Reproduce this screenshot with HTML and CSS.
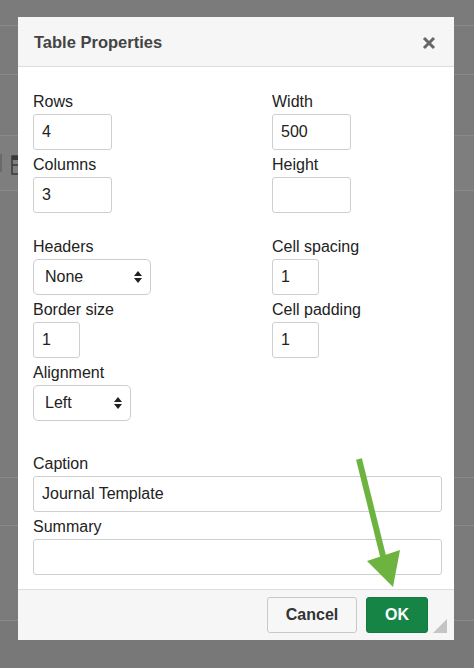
FILE: index.html
```html
<!DOCTYPE html>
<html>
<head>
<meta charset="utf-8">
<link rel="stylesheet" href="styles.css">
</head>
<body>
<div class="backdrop">
  <div class="band b1"></div>
  <div class="band b2"></div>
  <div class="band b3"></div>
  <div class="band toolbar">
    <span class="tb-sep"></span>
    <svg class="tb-icon" width="10" height="20" viewBox="0 0 10 20"><rect x="1" y="1" width="9" height="18" fill="none" stroke="#3a3a3a" stroke-width="1.5"/><rect x="1" y="1" width="9" height="4" fill="#3a3a3a"/><line x1="1" y1="10" x2="10" y2="10" stroke="#3a3a3a" stroke-width="1.5"/></svg>
  </div>
  <div class="band b5"></div>
  <div class="band b6"></div>
  <div class="band b7"></div>
  <div class="band b8"></div>
</div>

<div class="dialog">
  <div class="dlg-head">
    <span class="dlg-title">Table Properties</span>
    <svg class="dlg-close" width="14" height="14" viewBox="0 0 14 14"><path d="M2 2 L12 12 M12 2 L2 12" stroke="#666" stroke-width="3" stroke-linecap="butt"/></svg>
  </div>
  <div class="dlg-body">
    <div class="section two">
      <div class="col">
        <div class="field"><label>Rows</label><input class="inp w79" value="4"></div>
        <div class="field"><label>Columns</label><input class="inp w79" value="3"></div>
      </div>
      <div class="col">
        <div class="field"><label>Width</label><input class="inp w79" value="500"></div>
        <div class="field"><label>Height</label><input class="inp w79" value=""></div>
      </div>
    </div>
    <div class="section two gap24">
      <div class="col">
        <div class="field"><label>Headers</label><div class="sel w118"><span>None</span><svg width="8" height="14" viewBox="0 0 8 14"><path d="M4 1 L8 6 L0 6 Z M0 8 L8 8 L4 13 Z" fill="#222"/></svg></div></div>
        <div class="field"><label>Border size</label><input class="inp w47" value="1"></div>
        <div class="field"><label>Alignment</label><div class="sel w98"><span>Left</span><svg width="8" height="14" viewBox="0 0 8 14"><path d="M4 1 L8 6 L0 6 Z M0 8 L8 8 L4 13 Z" fill="#222"/></svg></div></div>
      </div>
      <div class="col">
        <div class="field"><label>Cell spacing</label><input class="inp w47" value="1"></div>
        <div class="field"><label>Cell padding</label><input class="inp w47" value="1"></div>
      </div>
    </div>
    <div class="section gap32">
      <div class="col">
        <div class="field"><label>Caption</label><input class="inp full" value="Journal Template"></div>
        <div class="field"><label>Summary</label><input class="inp full" value=""></div>
      </div>
    </div>
  </div>
  <div class="dlg-foot">
    <button class="btn cancel">Cancel</button>
    <button class="btn ok">OK</button>
  </div>
  <svg class="resize" width="14" height="14" viewBox="0 0 14 14"><path d="M14 0 L14 14 L0 14 Z" fill="#c4c4c4"/></svg>
</div>

<svg class="arrow" width="474" height="668" viewBox="0 0 474 668">
  <line x1="359" y1="459" x2="384" y2="560" stroke="#6db33f" stroke-width="6"/>
  <path d="M367 561 L400 550 L393 587 Z" fill="#6db33f"/>
</svg>
</body>
</html>
```

FILE: styles.css
```css
html, body {
  margin: 0;
  padding: 0;
}
body {
  width: 474px;
  height: 668px;
  overflow: hidden;
  position: relative;
  background: #787878;
  font-family: "Liberation Sans", Arial, Helvetica, sans-serif;
}
.backdrop {
  display: flex;
  flex-direction: column;
}
.band {
  background: #7b7b7b;
  border-bottom: 1px solid #8a8a8a;
}
.b1 { height: 25px; }
.b2 { height: 48px; }
.b3 { height: 60px; }
.toolbar {
  height: 54px;
  background: #7e7e7e;
  display: flex;
  align-items: center;
  gap: 9px;
}
.tb-sep {
  width: 2px;
  height: 18px;
  background: #6a6a6a;
}
.tb-icon { display: block; margin-top: 4px; }
.b5 { height: 286px; }
.b6 { height: 47px; }
.b7 { height: 94px; }
.b8 { height: 47px; background: #787878; border-bottom: none; }

.dialog {
  position: absolute;
  left: 18px;
  top: 17px;
  width: 436px;
  height: 623px;
  background: #fff;
  display: flex;
  flex-direction: column;
}
.dlg-head {
  height: 50px;
  box-sizing: border-box;
  background: #f6f6f6;
  border-bottom: 1px solid #dcdcdc;
  display: flex;
  align-items: center;
  justify-content: space-between;
  padding: 0 18px 0 16px;
}
.dlg-title {
  font-size: 16.5px;
  font-weight: bold;
  color: #444;
  margin-top: 1px;
}
.dlg-close { display: block; margin-top: 2px; }

.dlg-body {
  padding: 25px 12px 14px 15px;
  flex: 1;
  display: flex;
  flex-direction: column;
}
.section { display: flex; }
.two .col:first-child { width: 239px; }
.section .col { display: flex; flex-direction: column; gap: 5px; }
.gap24 { margin-top: 24px; }
.gap32 { margin-top: 33px; }
.gap32 .col { flex: 1; }
.field { display: flex; flex-direction: column; align-items: flex-start; }
.field label {
  font-size: 16px;
  line-height: 20px;
  color: #222;
  margin-bottom: 2px;
}
.inp {
  height: 36px;
  box-sizing: border-box;
  border: 1px solid #cfcfcf;
  border-radius: 3px;
  padding: 0 8px;
  font-family: "Liberation Sans", Arial, sans-serif;
  font-size: 16px;
  color: #222;
  background: #fff;
  outline: none;
  margin: 0;
}
.w79 { width: 79px; }
.w47 { width: 47px; }
.full { width: 409px; }
.sel {
  height: 36px;
  box-sizing: border-box;
  border: 1px solid #cdcdcd;
  border-radius: 5px;
  padding: 0 8px 0 11px;
  display: flex;
  align-items: center;
  justify-content: space-between;
  font-size: 16px;
  color: #222;
  background: #fff;
}
.sel svg { display: block; }
.w118 { width: 118px; }
.w98 { width: 98px; }

.dlg-foot {
  height: 51px;
  box-sizing: border-box;
  border-top: 1px solid #dcdcdc;
  background: #f6f6f6;
  display: flex;
  justify-content: flex-end;
  align-items: flex-start;
  gap: 9px;
  padding: 7px 26px 0 0;
}
.btn {
  height: 36px;
  box-sizing: border-box;
  font-family: "Liberation Sans", Arial, sans-serif;
  font-size: 16px;
  font-weight: bold;
  border-radius: 3px;
  margin: 0;
}
.cancel {
  width: 90px;
  background: #f7f7f7;
  border: 1px solid #c8c8c8;
  color: #333;
}
.ok {
  width: 62px;
  background: #158445;
  border: 1px solid #137a3f;
  color: #fff;
}
.resize {
  position: absolute;
  right: 7px;
  bottom: 7px;
  display: block;
}
.arrow {
  position: absolute;
  left: 0;
  top: 0;
  pointer-events: none;
}
```
